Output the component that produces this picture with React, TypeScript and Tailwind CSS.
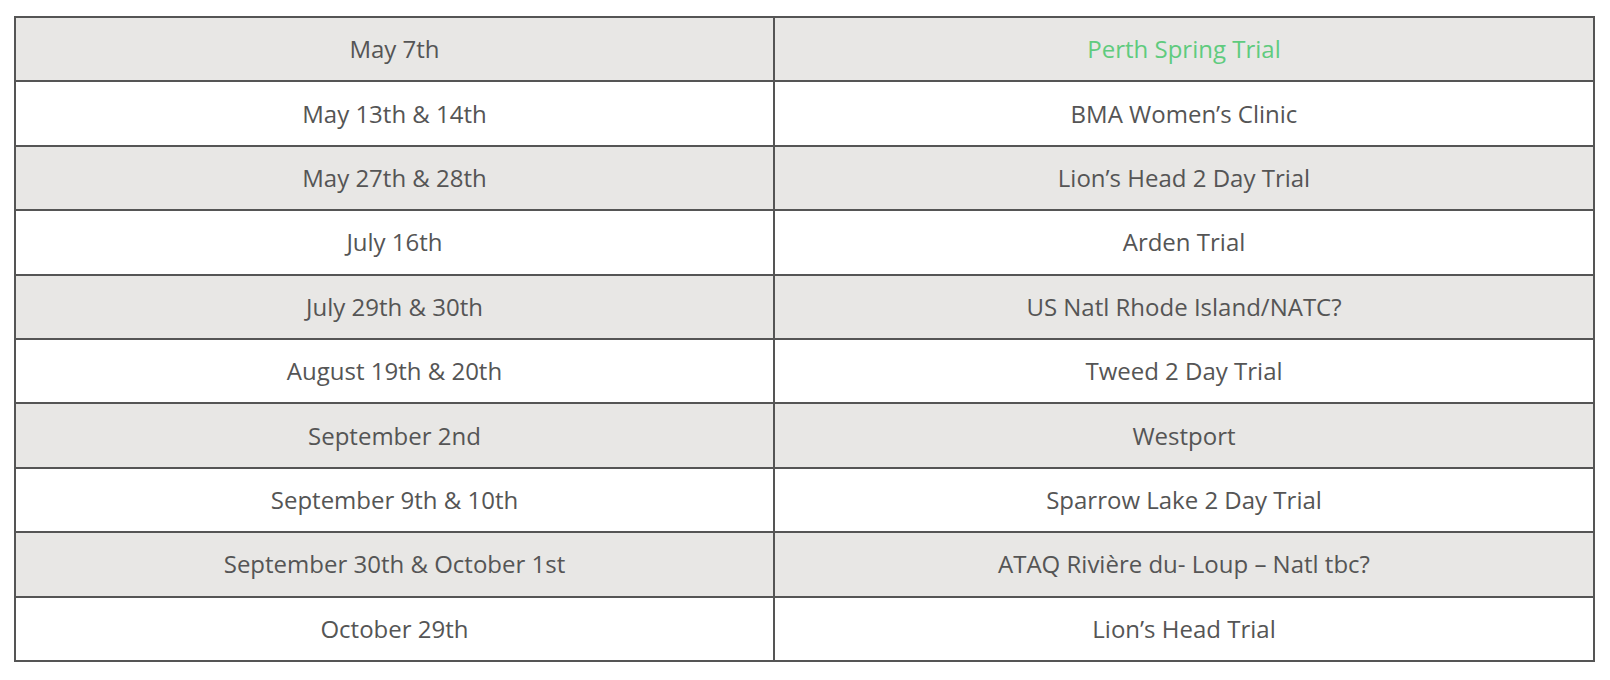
import React from "react";

const rows: [string, string][] = [
  ["May 7th", "Perth Spring Trial"],
  ["May 13th & 14th", "BMA Women’s Clinic"],
  ["May 27th & 28th", "Lion’s Head 2 Day Trial"],
  ["July 16th", "Arden Trial"],
  ["July 29th & 30th", "US Natl Rhode Island/NATC?"],
  ["August 19th & 20th", "Tweed 2 Day Trial"],
  ["September 2nd", "Westport"],
  ["September 9th & 10th", "Sparrow Lake 2 Day Trial"],
  ["September 30th & October 1st", "ATAQ Rivière du- Loup – Natl tbc?"],
  ["October 29th", "Lion’s Head Trial"],
];

export default function App() {
  return (
    <div className="bg-white w-[1610px] h-[680px] pl-[14px] pt-[16px] font-['Open_Sans',sans-serif] text-[#555555] text-[24px]">
      <table className="border-collapse border-2 border-[#555555] w-[1581px] table-fixed">
        <colgroup>
          <col className="w-[759px]" />
          <col />
        </colgroup>
        <tbody>
          {rows.map(([d, e], i) => (
            <tr key={i} className={i % 2 === 0 ? "bg-[#e8e7e5] h-[64.4px]" : "bg-white h-[64.4px]"}>
              <td className="border-2 border-[#555555] text-center align-middle p-0 leading-none">{d}</td>
              <td className={"border-2 border-[#555555] text-center align-middle p-0 leading-none " + (i === 0 ? "text-[#5fcb7e]" : "")}>{e}</td>
            </tr>
          ))}
        </tbody>
      </table>
    </div>
  );
}
